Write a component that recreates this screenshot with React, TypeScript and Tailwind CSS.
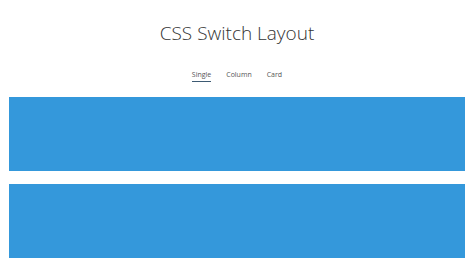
export default function App() {
  return (
    <div className="h-[266px] w-[474px] overflow-hidden bg-white font-['Open_Sans',sans-serif] text-[#333]">
      <h1 className="pt-[20px] text-center text-[19px] font-light leading-[26px]">CSS Switch Layout</h1>
      <nav className="mt-[24px] flex justify-center gap-[15px] text-[7px] leading-[10px] text-[#555]">
        <span className="border-b border-[#3d5a73] pb-[1px]">Single</span>
        <span>Column</span>
        <span>Card</span>
      </nav>
      <div className="mt-[15px] flex flex-col gap-[13px] px-[9px]">
        <div className="h-[74px] bg-[#3498db]" />
        <div className="h-[74px] bg-[#3498db]" />
      </div>
    </div>
  );
}
